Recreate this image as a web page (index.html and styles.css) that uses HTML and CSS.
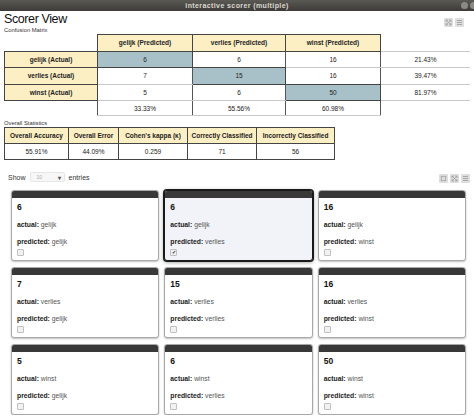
FILE: index.html
```html
<!DOCTYPE html>
<html lang="en">
<head>
    <meta charset="UTF-8">
    <title>interactive scorer (multiple)</title>
    <link rel="stylesheet" href="styles.css">
</head>
<body>
    <!-- Window title bar -->
    <div class="titlebar">
        <span></span>
        <span class="title">interactive scorer (multiple)</span>
        <div class="winbtns"><i></i><i></i></div>
    </div>

    <div class="page">
        <div class="view-head">
            <h1>Scorer View</h1>
            <div class="tools">
                <svg viewBox="0 0 9 9"><rect width="9" height="9" rx="1" fill="#dedede"/><path d="M2 2l5 5M7 2l-5 5M2 2h2M2 2v2M7 2h-2M7 2v2M2 7h2M2 7v-2M7 7h-2M7 7v-2" stroke="#a0a0a0" stroke-width="0.8" fill="none"/></svg>
                <svg viewBox="0 0 9 9"><rect width="9" height="9" rx="1" fill="#dedede"/><path d="M2 2.5h5M2 4.5h5M2 6.5h5" stroke="#a0a0a0" stroke-width="0.9"/></svg>
            </div>
        </div>

        <div class="caption">Confusion Matrix</div>
        <table class="matrix">
            <colgroup>
                <col style="width:93px"><col style="width:95px"><col style="width:93px"><col style="width:95px"><col>
            </colgroup>
            <tr>
                <td class="blank"></td>
                <th>gelijk (Predicted)</th>
                <th>verlies (Predicted)</th>
                <th>winst (Predicted)</th>
                <td class="blank"></td>
            </tr>
            <tr>
                <th>gelijk (Actual)</th>
                <td class="diag">6</td>
                <td class="above-diag">6</td>
                <td>16</td>
                <td class="pct">21.43%</td>
            </tr>
            <tr>
                <th>verlies (Actual)</th>
                <td>7</td>
                <td class="diag">15</td>
                <td class="above-diag">16</td>
                <td class="pct">39.47%</td>
            </tr>
            <tr>
                <th>winst (Actual)</th>
                <td>5</td>
                <td>6</td>
                <td class="diag">50</td>
                <td class="pct">81.97%</td>
            </tr>
            <tr class="totals">
                <td class="blank"></td>
                <td>33.33%</td>
                <td>55.56%</td>
                <td>60.98%</td>
                <td class="blank"></td>
            </tr>
        </table>

        <div class="caption stats-caption">Overall Statistics</div>
        <table class="stats">
            <tr>
                <th>Overall Accuracy</th>
                <th>Overall Error</th>
                <th>Cohen's kappa (&#954;)</th>
                <th>Correctly Classified</th>
                <th>Incorrectly Classified</th>
            </tr>
            <tr>
                <td>55.91%</td>
                <td>44.09%</td>
                <td>0.259</td>
                <td>71</td>
                <td>56</td>
            </tr>
        </table>

        <div class="list-bar">
            <div class="length">
                Show
                <span class="select"><span>10</span><b>&#9662;</b></span>
                entries
            </div>
            <div class="tools">
                <svg viewBox="0 0 9 9"><rect width="9" height="9" rx="1" fill="#dedede"/><rect x="2.3" y="2.3" width="4.4" height="4.4" stroke="#a0a0a0" stroke-width="0.8" fill="none"/></svg>
                <svg viewBox="0 0 9 9"><rect width="9" height="9" rx="1" fill="#dedede"/><path d="M2 2l5 5M7 2l-5 5M2 2h2M2 2v2M7 2h-2M7 2v2M2 7h2M2 7v-2M7 7h-2M7 7v-2" stroke="#a0a0a0" stroke-width="0.8" fill="none"/></svg>
                <svg viewBox="0 0 9 9"><rect width="9" height="9" rx="1" fill="#dedede"/><path d="M2 2.5h5M2 4.5h5M2 6.5h5" stroke="#a0a0a0" stroke-width="0.9"/></svg>
            </div>
        </div>

        <div class="cards">
            <div class="card">
                <div class="card-bar"></div>
                <div class="card-body">
                    <div class="count">6</div>
                    <div class="field"><b>actual:</b> gelijk</div>
                    <div class="field"><b>predicted:</b> gelijk</div>
                    <span class="check"></span>
                </div>
            </div>
            <div class="card selected">
                <div class="card-bar"></div>
                <div class="card-body">
                    <div class="count">6</div>
                    <div class="field"><b>actual:</b> gelijk</div>
                    <div class="field"><b>predicted:</b> verlies</div>
                    <span class="check checked">&#10004;</span>
                </div>
            </div>
            <div class="card">
                <div class="card-bar"></div>
                <div class="card-body">
                    <div class="count">16</div>
                    <div class="field"><b>actual:</b> gelijk</div>
                    <div class="field"><b>predicted:</b> winst</div>
                    <span class="check"></span>
                </div>
            </div>
            <div class="card">
                <div class="card-bar"></div>
                <div class="card-body">
                    <div class="count">7</div>
                    <div class="field"><b>actual:</b> verlies</div>
                    <div class="field"><b>predicted:</b> gelijk</div>
                    <span class="check"></span>
                </div>
            </div>
            <div class="card">
                <div class="card-bar"></div>
                <div class="card-body">
                    <div class="count">15</div>
                    <div class="field"><b>actual:</b> verlies</div>
                    <div class="field"><b>predicted:</b> verlies</div>
                    <span class="check"></span>
                </div>
            </div>
            <div class="card">
                <div class="card-bar"></div>
                <div class="card-body">
                    <div class="count">16</div>
                    <div class="field"><b>actual:</b> verlies</div>
                    <div class="field"><b>predicted:</b> winst</div>
                    <span class="check"></span>
                </div>
            </div>
            <div class="card">
                <div class="card-bar"></div>
                <div class="card-body">
                    <div class="count">5</div>
                    <div class="field"><b>actual:</b> winst</div>
                    <div class="field"><b>predicted:</b> gelijk</div>
                    <span class="check"></span>
                </div>
            </div>
            <div class="card">
                <div class="card-bar"></div>
                <div class="card-body">
                    <div class="count">6</div>
                    <div class="field"><b>actual:</b> winst</div>
                    <div class="field"><b>predicted:</b> verlies</div>
                    <span class="check"></span>
                </div>
            </div>
            <div class="card">
                <div class="card-bar"></div>
                <div class="card-body">
                    <div class="count">50</div>
                    <div class="field"><b>actual:</b> winst</div>
                    <div class="field"><b>predicted:</b> winst</div>
                    <span class="check"></span>
                </div>
            </div>
        </div>
    </div>
</body>
</html>
```

FILE: styles.css
```css
body {
    margin: 0;
    font-family: "Liberation Sans", Arial, sans-serif;
    color: #222;
    background: #fff;
    overflow: hidden;
}
.titlebar {
    height: 11px;
    display: grid;
    grid-template-columns: 1fr auto 1fr;
    align-items: center;
    background: linear-gradient(#5a5954, #3c3b37);
    color: #dcd8cf;
    font-size: 7px;
    font-weight: bold;
    letter-spacing: 0.4px;
}
.winbtns {
    display: flex;
    justify-content: flex-end;
    gap: 2px;
    margin-right: -3px;
}
.winbtns i {
    width: 7px;
    height: 7px;
    border-radius: 50%;
    background: #8c8a84;
}
.page {
    padding: 0 4px;
}
.view-head {
    display: flex;
    justify-content: space-between;
    align-items: flex-start;
}
h1 {
    margin: 0;
    font-weight: normal;
    font-size: 12.5px;
    letter-spacing: -0.4px;
    line-height: 16px;
    color: #111;
}
.tools {
    display: flex;
    gap: 2px;
    padding-top: 7px;
    margin-right: 3px;
}
.view-head .tools {
    margin-right: 6px;
}
.tools svg {
    width: 9px;
    height: 9px;
}
.caption {
    font-size: 5.8px;
    line-height: 7px;
    color: #333;
}
.stats-caption {
    margin-top: 4px;
}

/* confusion matrix */
.matrix {
    width: 466px;
    table-layout: fixed;
    border-collapse: collapse;
    font-size: 6.5px;
    text-align: center;
}
.matrix th, .matrix td {
    padding: 0;
    height: 15.5px;
}
.matrix th {
    background: #fdefc4;
    border: 1px solid #444;
    font-weight: bold;
}
.matrix td {
    border-left: 1px solid #555;
    border-right: 1px solid #555;
    border-top: 1px solid #c8c8c8;
    border-bottom: 1px solid #c8c8c8;
}
.matrix td.diag {
    background: #a8c1c8;
    border: 1px solid #444;
}
.matrix td.above-diag {
    border-bottom-color: #444;
}
.matrix td.pct {
    border-right: none;
}
.matrix td.blank {
    border: none;
}
.matrix .totals td {
    height: 14px;
}

/* overall statistics */
.stats {
    border-collapse: collapse;
    font-size: 6.5px;
    text-align: center;
}
.stats th, .stats td {
    border: 1px solid #444;
    height: 15px;
    padding: 0;
}
.stats th {
    background: #fdefc4;
    font-weight: bold;
    padding: 0 2px;
}
.stats th:nth-child(1) { width: 59px; }
.stats th:nth-child(2) { width: 45px; }
.stats th:nth-child(3) { width: 64px; }
.stats th:nth-child(4) { width: 64px; }
.stats th:nth-child(5) { width: 73px; }

/* list controls */
.list-bar {
    display: flex;
    justify-content: space-between;
    align-items: center;
    margin-top: 11px;
    height: 12px;
}
.length {
    display: flex;
    align-items: center;
    gap: 4px;
    padding-left: 4px;
    font-size: 7px;
    color: #333;
}
.select {
    display: inline-flex;
    justify-content: space-between;
    align-items: center;
    width: 35px;
    height: 10px;
    box-sizing: border-box;
    padding: 0 3px 0 6px;
    background: #f7f7f7;
    border: 1px solid #e6e6e6;
    border-radius: 2px;
    font-size: 5px;
    color: #aaa;
}
.select b {
    color: #555;
    font-size: 6px;
}
.list-bar .tools {
    padding-top: 2px;
    margin-right: 0;
}

/* cards */
.cards {
    display: grid;
    grid-template-columns: repeat(3, 1fr);
    gap: 6px 5px;
    margin: 7px 4px 0 7px;
}
.card {
    height: 71px;
    box-sizing: border-box;
    border: 1px solid #a8a8a8;
    border-radius: 3px;
    background: #fff;
    box-shadow: 0 1px 2px rgba(0, 0, 0, 0.25);
    overflow: hidden;
}
.card.selected {
    border-color: #1a1a1a;
    background: #f2f3f8;
    box-shadow: 0 0 0 1px #1a1a1a, 0 1px 4px rgba(0, 0, 0, 0.5);
}
.card-bar {
    height: 7px;
    background: #383838;
}
.card-body {
    padding: 0 5px;
}
.count {
    font-size: 8.5px;
    font-weight: bold;
    line-height: 10px;
    margin-top: 4px;
    color: #111;
}
.field {
    font-size: 6.8px;
    line-height: 9px;
    margin-top: 8px;
    color: #555;
}
.field b {
    color: #222;
}
.check {
    display: block;
    width: 5px;
    height: 5px;
    margin-top: 3px;
    border: 1px solid #c0c0c0;
    border-radius: 1px;
    background: #f2f2f2;
    font-size: 5px;
    line-height: 5px;
    text-align: center;
    color: #333;
}
```
